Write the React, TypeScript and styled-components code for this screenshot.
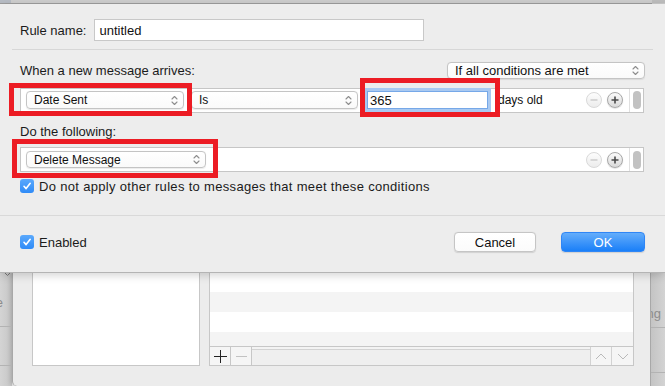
import React from 'react'
import styled, { createGlobalStyle } from 'styled-components'

const GlobalStyle = createGlobalStyle`
  html, body {
    margin: 0;
    padding: 0;
  }

  body {
    background: #ececec;
    font-family: 'Liberation Sans', Arial, sans-serif;
    font-size: 13px;
    color: #1b1b1b;
  }
`

const Chevrons = () => (
  <svg
    width="7"
    height="11"
    viewBox="0 0 7 11"
    fill="none"
    stroke="#8e8e8e"
    strokeWidth="1.1"
    strokeLinecap="round"
    strokeLinejoin="round"
  >
    <path d="M1 4 L3.5 1.5 L6 4" />
    <path d="M1 7 L3.5 9.5 L6 7" />
  </svg>
)

const Tick = () => (
  <svg width="10" height="10" viewBox="0 0 10 10">
    <path
      d="M2 5.3 L4.1 7.6 L8.2 2.3"
      stroke="#fff"
      strokeWidth="1.6"
      fill="none"
      strokeLinecap="round"
      strokeLinejoin="round"
    />
  </svg>
)

const PopUp: React.FC<{
  label: string
  width: number
  height?: number
  size?: number
}> = ({ label, width, height = 18, size = 12 }) => (
  <Popup $width={width} $height={height} $size={size}>
    <span>{label}</span>
    <Chevrons />
  </Popup>
)

const AddRemove: React.FC = () => (
  <>
    <RoundButton $enabled={false}>
      <svg width="8" height="8" viewBox="0 0 8 8">
        <path d="M0.5 4 H7.5" stroke="#cfcfcf" strokeWidth="1.6" />
      </svg>
    </RoundButton>
    <RoundButton $enabled>
      <svg width="8" height="8" viewBox="0 0 8 8">
        <path d="M0.5 4 H7.5 M4 0.5 V7.5" stroke="#4a4a4a" strokeWidth="1.6" />
      </svg>
    </RoundButton>
    <ScrollTrack>
      <ScrollThumb />
    </ScrollTrack>
  </>
)

const CheckOption: React.FC<{ label: string; wide?: boolean }> = ({
  label,
  wide,
}) => (
  <OptionRow>
    <Checkbox>
      <Tick />
    </Checkbox>
    <OptionText $wide={wide}>{label}</OptionText>
  </OptionRow>
)

const App: React.FC = () => {
  return (
    <>
      <GlobalStyle />
      <Screen>
        <ToolbarEdge>
          <EdgeSegment $kind="side" />
          <EdgeSegment $kind="bar" />
          <EdgeSegment $kind="end" />
        </ToolbarEdge>

        <Sheet>
          <FieldRow>
            <span>Rule name:</span>
            <TextField $width={330}>untitled</TextField>
          </FieldRow>
          <Divider />

          <SectionHeader>
            <span>When a new message arrives:</span>
            <PopUp
              label="If all conditions are met"
              width={198}
              height={17}
              size={13}
            />
          </SectionHeader>
          <RuleBox>
            <RuleItems>
              <PopUp label="Date Sent" width={158} />
              <PopUp label="Is" width={167} />
              <FocusedField>365</FocusedField>
              <Suffix>days old</Suffix>
            </RuleItems>
            <AddRemove />
          </RuleBox>

          <SectionHeader $top={11}>
            <span>Do the following:</span>
          </SectionHeader>
          <RuleBox $top={7}>
            <RuleItems>
              <PopUp label="Delete Message" width={180} height={17} />
            </RuleItems>
            <AddRemove />
          </RuleBox>

          <CheckOption
            label="Do not apply other rules to messages that meet these conditions"
            wide
          />

          <Footer>
            <CheckOption label="Enabled" />
            <ButtonGroup>
              <PushButton $width={82}>Cancel</PushButton>
              <PushButton $width={84} $primary>
                OK
              </PushButton>
            </ButtonGroup>
          </Footer>
        </Sheet>

        <Backdrop>
          <SidePane>
            <PaneRow $height={54}>
              <PaneCaret>
                <svg width="7" height="5" viewBox="0 0 7 5">
                  <path d="M0.5 0.5 L3.5 3.5 L6.5 0.5" stroke="#777" fill="none" />
                </svg>
              </PaneCaret>
              <PaneLabel $pad={9} $top={18}>
                Large
              </PaneLabel>
            </PaneRow>
            <PaneRow $height={38} />
          </SidePane>

          <Window>
            <ListBox />
            <Table>
              <TableRow />
              <TableRow $alt />
              <TableRow />
              <TableRow $alt $height={14} />
              <TableBar>
                <BarCell>
                  <svg width="13" height="13" viewBox="0 0 13 13">
                    <path d="M0 6.5 H13 M6.5 0 V13" stroke="#222" strokeWidth="1" />
                  </svg>
                </BarCell>
                <BarCell>
                  <svg width="11" height="11" viewBox="0 0 11 11">
                    <path d="M0 5.5 H11" stroke="#c2c2c2" strokeWidth="1" />
                  </svg>
                </BarCell>
                <BarFill />
                <BarCell $left>
                  <svg width="12" height="7" viewBox="0 0 12 7">
                    <path d="M1 6 L6 1 L11 6" stroke="#b9b9b9" fill="none" />
                  </svg>
                </BarCell>
                <BarCell $left $last>
                  <svg width="12" height="7" viewBox="0 0 12 7">
                    <path d="M1 1 L6 6 L11 1" stroke="#b9b9b9" fill="none" />
                  </svg>
                </BarCell>
              </TableBar>
            </Table>
          </Window>

          <SidePane $right>
            <PaneRow $height={55}>
              <PaneLabel $pad={4} $top={34}>
                ng
              </PaneLabel>
            </PaneRow>
            <PaneRow $height={44} />
          </SidePane>
        </Backdrop>

        <Callout $x={9} $y={83} $w={183} $h={33} />
        <Callout $x={360} $y={78} $w={140} $h={39} />
        <Callout $x={12} $y={139} $w={206} $h={39} />
      </Screen>
    </>
  )
}

export default App

// Styles
const Screen = styled.div`
  position: relative;
  width: 665px;
  height: 386px;
  overflow: hidden;
  display: flex;
  flex-direction: column;
  background: #ececec;
`

const ToolbarEdge = styled.div`
  height: 4px;
  flex-shrink: 0;
  display: flex;
`

const EdgeSegment = styled.div<{ $kind: 'side' | 'bar' | 'end' }>`
  width: ${p => (p.$kind === 'side' ? '11px' : p.$kind === 'end' ? '13px' : 'auto')};
  flex: ${p => (p.$kind === 'bar' ? 1 : 'none')};
  background: ${p =>
    p.$kind === 'side' ? '#b7bcc4' : p.$kind === 'end' ? '#bdbdbd' : '#cdcdcd'};
  border-bottom: 1px solid ${p => (p.$kind === 'end' ? '#c9c9c9' : '#9d9d9d')};
`

const Sheet = styled.div`
  position: relative;
  z-index: 1;
  height: 268px;
  flex-shrink: 0;
  display: flex;
  flex-direction: column;
  background: #ededed;
  box-shadow: 0 1px 0 #b4b4b4, 0 3px 9px rgba(0, 0, 0, 0.18);
`

const FieldRow = styled.div`
  display: flex;
  align-items: center;
  gap: 8px;
  height: 22px;
  margin: 15px 0 0 20px;
`

const TextField = styled.div<{ $width: number }>`
  width: ${p => p.$width}px;
  height: 22px;
  box-sizing: border-box;
  display: flex;
  align-items: center;
  padding: 0 4px;
  background: #fff;
  border: 1px solid #c8c8c8;
  color: #111;
`

const Divider = styled.div`
  height: 1px;
  margin: 8px 12px 0;
  background: #d7d7d7;
`

const SectionHeader = styled.div<{ $top?: number }>`
  display: flex;
  align-items: center;
  justify-content: space-between;
  height: 17px;
  margin-top: ${p => p.$top ?? 12}px;
  padding: 0 20px;
`

const RuleBox = styled.div<{ $top?: number }>`
  display: flex;
  align-items: center;
  height: 25px;
  box-sizing: border-box;
  margin: ${p => p.$top ?? 9}px 21px 0 20px;
  background: #fff;
  border: 1px solid #c6c6c6;
`

const RuleItems = styled.div`
  flex: 1;
  display: flex;
  align-items: center;
  gap: 7px;
  padding-left: 5px;
`

const Popup = styled.div<{ $width: number; $height: number; $size: number }>`
  width: ${p => p.$width}px;
  height: ${p => p.$height}px;
  box-sizing: border-box;
  display: flex;
  align-items: center;
  justify-content: space-between;
  padding: 0 5px 0 7px;
  background: linear-gradient(#ffffff, #fafafa);
  border: 1px solid #c4c4c4;
  border-radius: 4px;
  box-shadow: 0 0.5px 1px rgba(0, 0, 0, 0.08);
  color: #111;
  font-size: ${p => p.$size}px;
  white-space: nowrap;
`

const FocusedField = styled.div`
  width: 121px;
  height: 18px;
  box-sizing: border-box;
  display: flex;
  align-items: center;
  margin: 0 2px 0 2px;
  padding: 1px 2px 0;
  background: #fff;
  border: 1px solid #76a8e8;
  box-shadow: 0 0 0 3px #a9c9f1;
  color: #111;
`

const Suffix = styled.span`
  margin-left: 1px;
  font-size: 12px;
  color: #111;
`

const RoundButton = styled.div<{ $enabled: boolean }>`
  width: 16px;
  height: 16px;
  box-sizing: border-box;
  flex-shrink: 0;
  margin-right: 5px;
  display: flex;
  align-items: center;
  justify-content: center;
  border-radius: 50%;
  border: 1px solid ${p => (p.$enabled ? '#a8a8a8' : '#d9d9d9')};
  background: ${p =>
    p.$enabled
      ? 'linear-gradient(#fbfbfb, #d9d9d9)'
      : 'linear-gradient(#fdfdfd, #ececec)'};
  box-shadow: ${p => (p.$enabled ? '0 0.5px 1px rgba(0,0,0,0.2)' : 'none')};
`

const ScrollTrack = styled.div`
  align-self: stretch;
  width: 14px;
  margin-left: 1px;
  display: flex;
  align-items: center;
  padding-left: 3px;
  box-sizing: border-box;
  border-left: 1px solid #e0e0e0;
`

const ScrollThumb = styled.div`
  width: 8px;
  height: 18px;
  border-radius: 4px;
  background: #c2c2c2;
`

const OptionRow = styled.div`
  display: flex;
  align-items: center;
  gap: 5px;
  height: 14px;
  margin: 7px 0 0 20px;
`

const OptionText = styled.span<{ $wide?: boolean }>`
  white-space: nowrap;
  letter-spacing: ${p => (p.$wide ? '0.32px' : 'normal')};
`

const Checkbox = styled.span`
  width: 14px;
  height: 14px;
  flex-shrink: 0;
  display: flex;
  align-items: center;
  justify-content: center;
  border-radius: 3px;
  background: linear-gradient(#5ba9fc, #2f8bf7);
`

const Footer = styled.div`
  display: flex;
  align-items: center;
  justify-content: space-between;
  height: 20px;
  margin-top: 22px;
  padding: 16px 20px 20px 0;
  border-top: 1px solid #d9d9d9;

  ${OptionRow} {
    margin-top: 0;
  }
`

const ButtonGroup = styled.div`
  display: flex;
  gap: 25px;
`

const PushButton = styled.div<{ $width: number; $primary?: boolean }>`
  width: ${p => p.$width}px;
  height: 20px;
  box-sizing: border-box;
  display: flex;
  align-items: center;
  justify-content: center;
  border-radius: 4px;
  border: 1px solid ${p => (p.$primary ? '#2f86f6' : '#c5c5c5')};
  background: ${p =>
    p.$primary ? 'linear-gradient(#64adfb, #1a7ff8)' : 'linear-gradient(#ffffff, #fbfbfb)'};
  box-shadow: 0 0.5px 1px rgba(0, 0, 0, 0.12);
  color: ${p => (p.$primary ? '#fff' : '#111')};
`

const Backdrop = styled.div`
  flex: 1;
  display: flex;
  min-height: 0;
`

const SidePane = styled.div<{ $right?: boolean }>`
  width: ${p => (p.$right ? '14px' : '12px')};
  flex-shrink: 0;
  display: flex;
  flex-direction: column;
  overflow: hidden;
  background: ${p =>
    p.$right
      ? 'linear-gradient(to right, #c4c4c4, #d3d3d3)'
      : 'linear-gradient(to right, #d4d4d4, #c6c6c6)'};
`

const PaneRow = styled.div<{ $height: number }>`
  position: relative;
  height: ${p => p.$height}px;
  flex-shrink: 0;
  border-bottom: 1px solid #b3b3b3;
`

const PaneCaret = styled.div`
  display: flex;
  justify-content: flex-end;
  padding: 0 1px 0 0;
  height: 5px;
  overflow: hidden;
`

const PaneLabel = styled.div<{ $pad: number; $top?: number }>`
  display: flex;
  justify-content: flex-end;
  white-space: nowrap;
  margin-top: ${p => p.$top ?? 20}px;
  padding-right: ${p => p.$pad}px;
  color: #8d8d8d;
  font-size: 13px;
`

const Window = styled.div`
  flex: 1;
  display: flex;
  align-items: flex-end;
  gap: 9px;
  padding: 0 16px 20px 19px;
  background: #ececec;
  border-left: 1px solid #a8a8a8;
  border-right: 1px solid #a8a8a8;
  border-bottom-left-radius: 5px;
  box-shadow: -2px 0 4px rgba(0, 0, 0, 0.12), 2px 0 4px rgba(0, 0, 0, 0.12);
`

const ListBox = styled.div`
  width: 168px;
  height: 94px;
  box-sizing: border-box;
  background: #fff;
  border: 1px solid #c7c7c7;
  border-top: none;
`

const Table = styled.div`
  flex: 1;
  height: 94px;
  box-sizing: border-box;
  display: flex;
  flex-direction: column;
  border: 1px solid #c7c7c7;
  border-top: none;
`

const TableRow = styled.div<{ $alt?: boolean; $height?: number }>`
  height: ${p => p.$height ?? 20}px;
  flex-shrink: 0;
  background: ${p => (p.$alt ? '#f4f4f4' : '#fff')};
`

const TableBar = styled.div`
  flex: 1;
  display: flex;
  border-top: 1px solid #c7c7c7;
  background: #f3f3f3;
`

const BarCell = styled.div<{ $left?: boolean; $last?: boolean }>`
  width: ${p => (p.$last ? 22 : 21)}px;
  display: flex;
  align-items: center;
  justify-content: center;
  box-sizing: border-box;
  background: #f5f5f5;
  border-right: ${p => (p.$left ? 'none' : '1px solid #c7c7c7')};
  border-left: ${p => (p.$left ? '1px solid #d2d2d2' : 'none')};
`

const BarFill = styled.div`
  flex: 1;
  margin-top: 2px;
  border-top: 1px solid #d3d3d3;
  background: #efefef;
`

const Callout = styled.div<{ $x: number; $y: number; $w: number; $h: number }>`
  position: absolute;
  z-index: 5;
  left: ${p => p.$x}px;
  top: ${p => p.$y}px;
  width: ${p => p.$w}px;
  height: ${p => p.$h}px;
  box-sizing: border-box;
  border: 5px solid #ec1c24;
  pointer-events: none;
`
